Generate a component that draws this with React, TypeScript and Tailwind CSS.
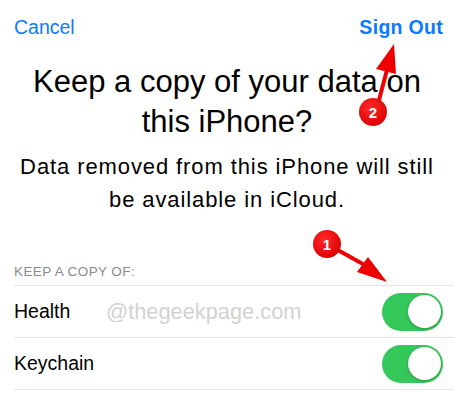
import React from 'react';

const Toggle: React.FC = () => (
  <div className="w-[61px] h-[38px] rounded-full bg-[#34c759] flex items-center justify-end pr-[2px]">
    <div className="w-[33px] h-[33px] rounded-full bg-white shadow-[0_1px_3px_rgba(0,0,0,0.25)]" />
  </div>
);

const Row: React.FC<{ label: string }> = ({ label }) => (
  <div className="h-[52px] flex items-center justify-between pr-[11px] border-b border-[#e5e5ea]">
    <span className="text-[19.5px] text-black">{label}</span>
    <Toggle />
  </div>
);

const App: React.FC = () => {
  return (
    <div className="relative w-[454px] h-[416px] bg-white overflow-hidden font-['Liberation_Sans',Arial,sans-serif]">
      {/* nav */}
      <div className="flex justify-between items-center pl-[14px] pr-[11px] pt-[15px] h-[39px]">
        <span className="text-[19.5px] leading-[24px] text-[#0a7aff]">Cancel</span>
        <span className="text-[19.5px] leading-[24px] font-bold text-[#0a7aff] tracking-[0.3px]">Sign Out</span>
      </div>

      <h1 className="mt-[23px] text-center text-[31px] leading-[40px] text-black">
        Keep a copy of your data on
        <br />
        this iPhone?
      </h1>

      <p className="mt-[8px] text-center text-[22px] leading-[33px] text-black tracking-[0.9px]">
        Data removed from this iPhone will still
        <br />
        be available in iCloud.
      </p>

      <div className="mt-[48px] px-[14px] text-[13.5px] leading-[16px] text-[#8a8a8e] tracking-[0.4px]">
        KEEP A COPY OF:
      </div>

      <div className="ml-[14px] mt-[5px] border-t border-[#e5e5ea]">
        <Row label="Health" />
        <Row label="Keychain" />
      </div>

      {/* watermark */}
      <span className="absolute left-[106px] top-[298px] text-[21.8px] leading-[28px] text-[#d2d2d2]">
        @thegeekpage.com
      </span>

      {/* annotations */}
      <svg className="absolute inset-0 pointer-events-none" width="454" height="416" viewBox="0 0 454 416">
        <defs>
          <radialGradient id="dot" cx="40%" cy="35%" r="70%">
            <stop offset="0%" stopColor="#ff2a2a" />
            <stop offset="100%" stopColor="#d80000" />
          </radialGradient>
        </defs>
        <line x1="379" y1="100" x2="388" y2="66" stroke="#ee0000" strokeWidth="4" strokeLinecap="round" />
        <polygon points="394,44 376,69 396,74" fill="#ee0000" />
        <circle cx="373" cy="112" r="14" fill="url(#dot)" />
        <text x="373" y="117.5" textAnchor="middle" fontSize="15" fontWeight="700" fill="#fff" fontFamily="Liberation Sans, Arial, sans-serif">2</text>

        <line x1="336" y1="249" x2="370" y2="268" stroke="#ee0000" strokeWidth="4" strokeLinecap="round" />
        <polygon points="387,282 357,272 368,257" fill="#ee0000" />
        <circle cx="327" cy="244" r="14" fill="url(#dot)" />
        <text x="327" y="249.5" textAnchor="middle" fontSize="15" fontWeight="700" fill="#fff" fontFamily="Liberation Sans, Arial, sans-serif">1</text>
      </svg>
    </div>
  );
};

export default App;
